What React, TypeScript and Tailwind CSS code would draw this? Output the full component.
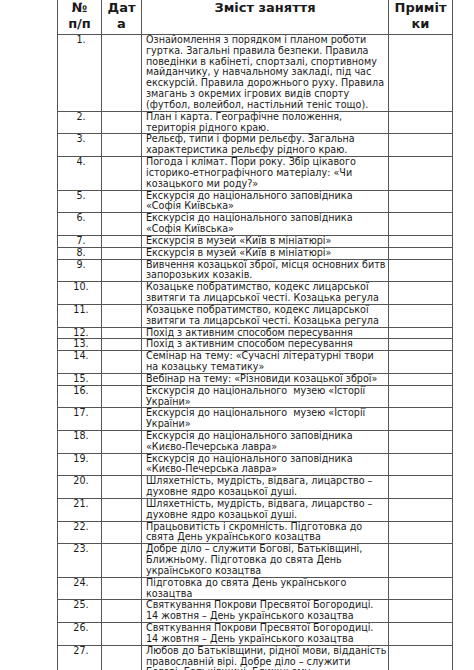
const rows: string[] = [
  "Ознайомлення з порядком і планом роботи гуртка. Загальні правила безпеки. Правила поведінки в кабінеті, спортзалі, спортивному майданчику, у навчальному закладі, під час екскурсій. Правила дорожнього руху. Правила змагань з окремих ігрових видів спорту (футбол, волейбол, настільний теніс тощо).",
  "План і карта. Географічне положення, територія рідного краю.",
  "Рельєф, типи і форми рельєфу. Загальна характеристика рельєфу рідного краю.",
  "Погода і клімат. Пори року. Збір цікавого історико-етнографічного матеріалу: «Чи козацького ми роду?»",
  "Екскурсія до національного заповідника «Софія Київська»",
  "Екскурсія до національного заповідника «Софія Київська»",
  "Екскурсія в музей «Київ в мініатюрі»",
  "Екскурсія в музей «Київ в мініатюрі»",
  "Вивчення козацької зброї, місця основних битв запорозьких козаків.",
  "Козацьке побратимство, кодекс лицарської звитяги та лицарської честі. Козацька регула",
  "Козацьке побратимство, кодекс лицарської звитяги та лицарської честі. Козацька регула",
  "Похід з активним способом пересування",
  "Похід з активним способом пересування",
  "Семінар на тему: «Сучасні літературні твори на козацьку тематику»",
  "Вебінар на тему: «Різновиди козацької зброї»",
  "Екскурсія до національного  музею «Історії України»",
  "Екскурсія до національного  музею «Історії України»",
  "Екскурсія до національного заповідника «Києво-Печерська лавра»",
  "Екскурсія до національного заповідника «Києво-Печерська лавра»",
  "Шляхетність, мудрість, відвага, лицарство – духовне ядро козацької душі.",
  "Шляхетність, мудрість, відвага, лицарство – духовне ядро козацької душі.",
  "Працьовитість і скромність. Підготовка до свята День українського козацтва",
  "Добре діло – служити Богові, Батьківщині, Ближньому. Підготовка до свята День українського козацтва",
  "Підготовка до свята День українського козацтва",
  "Святкування Покрови Пресвятої Богородиці. 14 жовтня – День українського козацтва",
  "Святкування Покрови Пресвятої Богородиці. 14 жовтня – День українського козацтва",
  "Любов до Батьківщини, рідної мови, відданість православній вірі. Добре діло – служити Богові, Батьківщині, Ближньому.",
];

export default function App() {
  return (
    <div className="h-[670px] w-[474px] overflow-hidden bg-white font-['DejaVu_Sans',sans-serif] text-[#1a1a1a]">
      <table className="ml-[57px] -mt-px w-[395px] table-fixed border-collapse">
        <thead>
          <tr className="text-[13px] font-bold leading-[15.5px]">
            <th className="w-[44px] border border-[#555] p-0 pb-[3px] text-center align-top">
              №<br />п/п
            </th>
            <th className="w-[40px] border border-[#555] p-0 pb-[3px] text-center align-top">
              Дат<br />а
            </th>
            <th className="w-[247px] border border-[#555] p-0 pb-[3px] text-center align-top">Зміст заняття</th>
            <th className="w-[64px] border border-[#555] p-0 pb-[3px] text-center align-top">
              Приміт<br />ки
            </th>
          </tr>
        </thead>
        <tbody className="text-[9.6px] leading-[10.83px]">
          {rows.map((text, i) => (
            <tr key={i}>
              <td className="border border-[#555] p-0 pl-[3px] text-center align-top">{i + 1}.</td>
              <td className="border border-[#555] p-0" />
              <td className="whitespace-pre-wrap border border-[#555] p-0 pl-[4px] pr-[1px] align-top">{text}</td>
              <td className="border border-[#555] p-0" />
            </tr>
          ))}
        </tbody>
      </table>
    </div>
  );
}
